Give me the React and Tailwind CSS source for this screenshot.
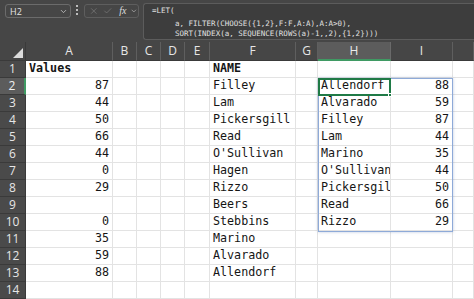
import { ChevronDown, X, Check } from 'lucide-react';

const cols = [
  { key: 'A', w: 87 },
  { key: 'B', w: 24 },
  { key: 'C', w: 24 },
  { key: 'D', w: 24 },
  { key: 'E', w: 25 },
  { key: 'F', w: 86 },
  { key: 'G', w: 22 },
  { key: 'H', w: 73 },
  { key: 'I', w: 62 },
  { key: 'J', w: 21 },
];

const colA = ['Values', 87, 44, 50, 66, 44, 0, 29, '', 0, 35, 59, 88, ''];
const colF = ['NAME', 'Filley', 'Lam', 'Pickersgill', 'Read', "O'Sullivan", 'Hagen', 'Rizzo', 'Beers', 'Stebbins', 'Marino', 'Alvarado', 'Allendorf', ''];
const colH = ['', 'Allendorf', 'Alvarado', 'Filley', 'Lam', 'Marino', "O'Sullivan", 'Pickersgill', 'Read', 'Rizzo', '', '', '', ''];
const colI = ['', 88, 59, 87, 44, 35, 44, 50, 66, 29, '', '', '', ''];

const mono = { fontFamily: '"DejaVu Sans Mono", monospace' };

function cellValue(key, r) {
  if (key === 'A') return colA[r];
  if (key === 'F') return colF[r];
  if (key === 'H') return colH[r];
  if (key === 'I') return colI[r];
  return '';
}

function FormulaBar() {
  return (
    <div className="h-[42px] bg-[#464646] flex items-start text-[#e4e4e4] font-['Open_Sans',sans-serif]">
      <div className="ml-[5px] mt-[4px] w-[66px] h-[14px] border border-[#6b6b6b] rounded-[3px] flex items-center justify-between pl-[4px] pr-[2px]">
        <span className="text-[9px] leading-none">H2</span>
        <ChevronDown size={9} strokeWidth={2} className="text-[#cfcfcf]" />
      </div>
      <div className="mt-[5px] ml-[4px] w-[4px] flex flex-col items-center gap-[2px]">
        <div className="w-[2px] h-[2px] bg-[#bdbdbd]" />
        <div className="w-[2px] h-[2px] bg-[#bdbdbd]" />
        <div className="w-[2px] h-[2px] bg-[#bdbdbd]" />
      </div>
      <div className="ml-[5px] mt-[4px] w-[55px] h-[14px] border border-[#5e5e5e] rounded-[3px] flex items-center pl-[4px] gap-[4px] text-[#8a8a8a]">
        <X size={10} strokeWidth={1.4} />
        <Check size={10} strokeWidth={1.4} />
        <span className="text-[#dedede] italic text-[10px] leading-none font-['Liberation_Serif',serif] ml-[3px]">fx</span>
        <ChevronDown size={8} strokeWidth={2} className="text-[#bdbdbd]" />
      </div>
      <div className="ml-[4px] mt-[3px] flex-1 h-[37px] bg-[#3d3d3d] border border-[#5c5c5c] border-r-0 rounded-l-[3px] text-[7.5px] leading-[10px] text-[#e0e0e0] pl-[8px] pt-[2px] whitespace-pre" style={mono}>
        <div>=LET(</div>
        <div className="mt-[3px] pl-[23px]">a, FILTER(CHOOSE({'{'}1,2{'}'},F:F,A:A),A:A&gt;0),</div>
        <div className="pl-[23px]">SORT(INDEX(a, SEQUENCE(ROWS(a)-1,,2),{'{'}1,2{'}'})))</div>
      </div>
    </div>
  );
}

function Grid() {
  const template = '26px ' + cols.map((c) => c.w + 'px').join(' ');
  const rows = Array.from({ length: 14 }, (_, i) => i);
  return (
    <div className="relative grid" style={{ gridTemplateColumns: template, gridAutoRows: '17px', gridTemplateRows: '19px' }}>
      <div className="bg-[#464646] border-r border-b border-[#3a3a3a] relative">
        <div className="absolute right-[2px] bottom-[2px] w-0 h-0 border-l-[10px] border-l-transparent border-b-[10px] border-b-[#dcdcdc]" />
      </div>
      {cols.map((c) => (
        <div
          key={c.key}
          className={
            c.key === 'H'
              ? 'bg-[#5c5c5c] border-r border-[#6a6a6a] border-b-2 border-b-[#3f9a63] flex items-center justify-center text-[12px] text-[#ececec] font-["Open_Sans",sans-serif]'
              : 'bg-[#464646] border-r border-b border-r-[#5f5f5f] border-b-[#3a3a3a] flex items-center justify-center text-[12px] text-[#e6e6e6] font-["Open_Sans",sans-serif]'
          }
        >
          {c.key === 'J' ? '' : c.key}
        </div>
      ))}
      {rows.map((r) => (
        <Row key={r} r={r} />
      ))}
      <div
        className="absolute border border-[#8eaad8] shadow-[0_0_3px_rgba(80,110,170,0.35)] pointer-events-none"
        style={{ left: 318, top: 19 + 17, width: 135, height: 17 * 9 + 1 }}
      />
      <div className="absolute border-2 border-[#1f7a46] pointer-events-none" style={{ left: 318, top: 36, width: 73, height: 18 }}>
        <div className="absolute -right-[3px] -bottom-[3px] w-[4px] h-[4px] bg-[#1f7a46] border border-white" />
      </div>
    </div>
  );
}

function Row({ r }) {
  const sel = r === 1;
  return (
    <>
      <div
        className={
          sel
            ? 'bg-[#5c5c5c] border-r-2 border-r-[#3f9a63] border-b border-b-[#3a3a3a] flex items-center justify-center text-[12px] text-[#f0f0f0] font-["Open_Sans",sans-serif]'
            : 'bg-[#4a4a4a] border-r border-b border-[#3a3a3a] flex items-center justify-center text-[12px] text-[#e6e6e6] font-["Open_Sans",sans-serif]'
        }
      >
        {r + 1}
      </div>
      {cols.map((c) => {
        const v = cellValue(c.key, r);
        const isNum = typeof v === 'number';
        const bold = r === 0 && (c.key === 'A' || c.key === 'F');
        return (
          <div
            key={c.key}
            className={
              'bg-white border-r border-b border-[#e3e3e3] flex items-center overflow-hidden whitespace-nowrap text-[11.7px] text-[#151515] px-[3px] ' +
              (isNum ? 'justify-end' : 'justify-start') +
              (bold ? ' font-bold' : '')
            }
            style={mono}
          >
            {v === '' ? null : v}
          </div>
        );
      })}
    </>
  );
}

export default function App() {
  return (
    <div className="w-[474px] h-[299px] overflow-hidden bg-white">
      <FormulaBar />
      <Grid />
    </div>
  );
}
